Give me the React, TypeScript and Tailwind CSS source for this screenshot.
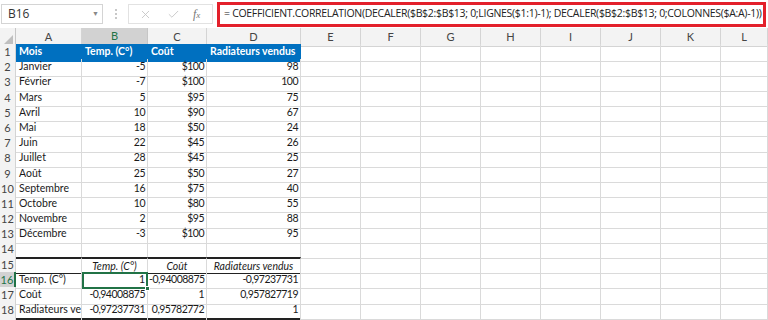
import { Check, X } from 'lucide-react'

const COLS = ['A', 'B', 'C', 'D', 'E', 'F', 'G', 'H', 'I', 'J', 'K', 'L']

const GRID = 'grid grid-cols-[16px_66px_66px_59px_94px_60px_60px_60px_60px_60px_60px_60px_1fr]'

const FORMULA =
  '= COEFFICIENT.CORRELATION(DECALER($B$2:$B$13; 0;LIGNES($1:1)-1); DECALER($B$2:$B$13; 0;COLONNES($A:A)-1))'

type Row = [string, string, string, string]

const DATA: Row[] = [
  ['Janvier', '-5', '$100', '98'],
  ['Février', '-7', '$100', '100'],
  ['Mars', '5', '$95', '75'],
  ['Avril', '10', '$90', '67'],
  ['Mai', '18', '$50', '24'],
  ['Juin', '22', '$45', '26'],
  ['Juillet', '28', '$45', '25'],
  ['Août', '25', '$50', '27'],
  ['Septembre', '16', '$75', '40'],
  ['Octobre', '10', '$80', '55'],
  ['Novembre', '2', '$95', '88'],
  ['Décembre', '-3', '$100', '95'],
]

const CORR: Row[] = [
  ['Temp. (C°)', '1', '-0,94008875', '-0,97237731'],
  ['Coût', '-0,94008875', '1', '0,957827719'],
  ['Radiateurs vendus', '-0,97237731', '0,95782772', '1'],
]

function RowNum({ n, active }: { n: number; active?: boolean }) {
  return (
    <div
      className={`flex items-center justify-center border-b border-r text-[11px] ${
        active
          ? 'border-b-[#c6c6c6] border-r-2 border-r-[#217346] bg-[#d2d2d2] text-[#217346]'
          : 'border-[#d4d4d4] bg-[#f3f3f3] text-[#444]'
      }`}
    >
      {n}
    </div>
  )
}

function Empties({ count }: { count: number }) {
  return (
    <>
      {Array.from({ length: count }).map((_, i) => (
        <div key={i} className="border-b border-r border-[#dadada]" />
      ))}
    </>
  )
}

function Cell({
  children,
  right,
  className = '',
}: {
  children?: React.ReactNode
  right?: boolean
  className?: string
}) {
  return (
    <div
      className={`overflow-hidden whitespace-nowrap border-b border-r border-[#dadada] leading-[15px] ${
        right ? 'pl-[1px] pr-[2px] text-right tracking-[-0.5px]' : 'px-[3px]'
      } ${className}`}
    >
      {children}
    </div>
  )
}

export default function App() {
  return (
    <div
      className="h-[320px] w-[768px] overflow-hidden bg-white text-[#1a1a1a]"
      style={{ fontFamily: 'Lato, "Liberation Sans", sans-serif' }}
    >
      {/* formula bar */}
      <div className="flex h-[28px] items-center bg-white pr-[2px]">
        <div
          className="ml-[1px] flex h-[20px] w-[102px] shrink-0 items-center justify-between border border-[#d4d4d4] pl-[6px] pr-[3px] text-[12px] text-[#333]"
          style={{ fontFamily: '"Open Sans", sans-serif' }}
        >
          <span>B16</span>
          <span className="text-[7px] text-[#888]">▼</span>
        </div>
        <div className="flex w-[25px] shrink-0 flex-col items-center justify-center gap-[2px]">
          <span className="h-[2px] w-[2px] bg-[#c8c8c8]" />
          <span className="h-[2px] w-[2px] bg-[#c8c8c8]" />
          <span className="h-[2px] w-[2px] bg-[#c8c8c8]" />
        </div>
        <div className="flex h-[20px] w-[85px] shrink-0 items-center border border-[#e2e2e2] pl-[10px]">
          <X size={13} strokeWidth={1.6} className="text-[#c4c4c4]" />
          <Check size={13} strokeWidth={1.6} className="ml-[15px] text-[#c4c4c4]" />
          <span
            className="ml-[13px] text-[12px] italic text-[#777]"
            style={{ fontFamily: '"Liberation Serif", serif' }}
          >
            f<span className="text-[9px]">x</span>
          </span>
        </div>
        <div
          className="ml-[4px] flex h-[25px] min-w-0 flex-1 items-center overflow-hidden whitespace-nowrap border-[3px] border-[#e3202b] pl-[4px] text-[10.5px] text-[#222]"
          style={{ fontFamily: '"Open Sans", sans-serif', letterSpacing: '-0.3px' }}
        >
          {FORMULA}
        </div>
      </div>

      {/* column headers */}
      <div className={`${GRID} h-[16px] text-[11px] text-[#444]`}>
        <div className="flex items-end justify-end border-b border-r border-[#c6c6c6] bg-[#f3f3f3] p-[2px]">
          <span className="h-0 w-0 border-b-[9px] border-l-[9px] border-b-[#bfbfbf] border-l-transparent" />
        </div>
        {COLS.map(c => (
          <div
            key={c}
            className={`flex items-center justify-center border-r ${
              c === 'B'
                ? 'border-b-2 border-b-[#217346] border-r-[#c6c6c6] bg-[#d2d2d2] text-[#217346]'
                : 'border-b border-[#d4d4d4] bg-[#f3f3f3]'
            }`}
          >
            {c}
          </div>
        ))}
      </div>

      {/* rows */}
      <div className="text-[10.5px]">
        <div className={`${GRID} h-[15.2px]`}>
          <RowNum n={1} />
          {['Mois', 'Temp. (C°)', 'Coût', 'Radiateurs vendus'].map(h => (
            <div
              key={h}
              className="overflow-hidden whitespace-nowrap bg-[#0070c0] px-[3px] font-bold leading-[15px] text-white"
            >
              {h}
            </div>
          ))}
          <Empties count={8} />
        </div>

        {DATA.map((r, i) => (
          <div key={r[0]} className={`${GRID} h-[15.2px]`}>
            <RowNum n={i + 2} />
            <Cell>{r[0]}</Cell>
            <Cell right>{r[1]}</Cell>
            <Cell right>{r[2]}</Cell>
            <Cell right>{r[3]}</Cell>
            <Empties count={8} />
          </div>
        ))}

        <div className={`${GRID} h-[15.2px]`}>
          <RowNum n={14} />
          <Empties count={12} />
        </div>

        <div className={`${GRID} h-[15.2px]`}>
          <RowNum n={15} />
          <Cell className="border-t-2 border-b-[#222] border-t-[#222]" />
          {['Temp. (C°)', 'Coût', 'Radiateurs vendus'].map(h => (
            <Cell key={h} className="border-t-2 border-b-[#222] border-t-[#222] text-center italic leading-[12px]">
              {h}
            </Cell>
          ))}
          <Empties count={8} />
        </div>

        {CORR.map((r, i) => {
          const last = i === 2 ? 'border-b-2 border-b-[#222] leading-[13px]' : ''
          return (
            <div key={r[0]} className={`${GRID} h-[15.2px]`}>
              <RowNum n={i + 16} active={i === 0} />
              <Cell className={last}>{r[0]}</Cell>
              {i === 0 ? (
                <div className="relative border-2 border-[#217346] px-[1px] text-right leading-[11px]">
                  {r[1]}
                  <span className="absolute -bottom-[4px] -right-[4px] h-[5px] w-[5px] border border-white bg-[#217346]" />
                </div>
              ) : (
                <Cell right className={last}>
                  {r[1]}
                </Cell>
              )}
              <Cell right className={last}>
                {r[2]}
              </Cell>
              <Cell right className={last}>
                {r[3]}
              </Cell>
              <Empties count={8} />
            </div>
          )
        })}

        <div className={`${GRID} h-[15.2px]`}>
          <RowNum n={19} />
          <Empties count={12} />
        </div>
      </div>
    </div>
  )
}
